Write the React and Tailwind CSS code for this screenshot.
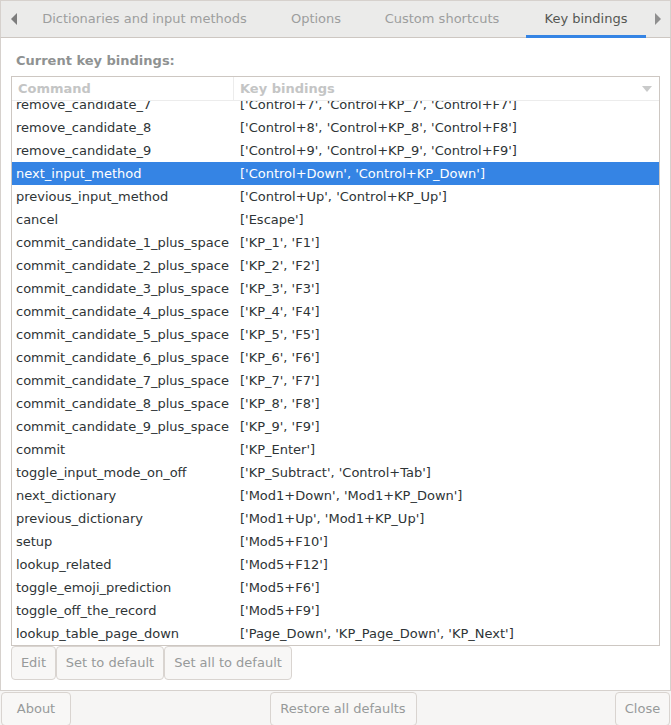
import React from 'react';

const ROWS = [
  ['remove_candidate_7', "['Control+7', 'Control+KP_7', 'Control+F7']"],
  ['remove_candidate_8', "['Control+8', 'Control+KP_8', 'Control+F8']"],
  ['remove_candidate_9', "['Control+9', 'Control+KP_9', 'Control+F9']"],
  ['next_input_method', "['Control+Down', 'Control+KP_Down']"],
  ['previous_input_method', "['Control+Up', 'Control+KP_Up']"],
  ['cancel', "['Escape']"],
  ...[1, 2, 3, 4, 5, 6, 7, 8, 9].map((n) => [`commit_candidate_${n}_plus_space`, `['KP_${n}', 'F${n}']`]),
  ['commit', "['KP_Enter']"],
  ['toggle_input_mode_on_off', "['KP_Subtract', 'Control+Tab']"],
  ['next_dictionary', "['Mod1+Down', 'Mod1+KP_Down']"],
  ['previous_dictionary', "['Mod1+Up', 'Mod1+KP_Up']"],
  ['setup', "['Mod5+F10']"],
  ['lookup_related', "['Mod5+F12']"],
  ['toggle_emoji_prediction', "['Mod5+F6']"],
  ['toggle_off_the_record', "['Mod5+F9']"],
  ['lookup_table_page_down', "['Page_Down', 'KP_Page_Down', 'KP_Next']"],
];

const SELECTED = 'next_input_method';

export default function App() {
  return (
    <div
      className="w-[671px] h-[725px] flex flex-col bg-[#f6f5f4] text-[13px] text-[#2e3436] overflow-hidden"
      style={{ fontFamily: '"DejaVu Sans", sans-serif' }}
    >
      {/* TABS */}
      <div className="h-[38px] shrink-0 flex items-stretch bg-[#ebebea] border border-[#d6d1cd] border-b-[#cdc7c2]">
        <div className="w-[26px] flex items-center justify-center">
          <svg width="8" height="14" viewBox="0 0 8 14"><polygon points="7,1 7,13 1,7" fill="#7d7d7d" /></svg>
        </div>
        <Tab label="Dictionaries and input methods" w="w-[235px]" />
        <Tab label="Options" w="w-[108px]" />
        <Tab label="Custom shortcuts" w="w-[144px]" />
        <div className="w-[12px]" />
        <Tab label="Key bindings" w="w-[120px]" active />
        <div className="flex-1 flex items-center justify-center">
          <svg width="8" height="14" viewBox="0 0 8 14"><polygon points="1,1 1,13 7,7" fill="#8f8f8f" /></svg>
        </div>
      </div>

      {/* PAGE */}
      <div className="flex-1 flex flex-col bg-white border-x border-b border-[#d6d1cd] px-[10px]">
        <div className="h-[38px] flex items-center pl-[5px] pt-[8px] font-bold text-[#8f9292]">Current key bindings:</div>

        <div className="h-[570px] border border-[#cdc7c2] flex flex-col">
          <div className="h-[24px] shrink-0 flex items-center border-b border-[#ececec] font-bold text-[#c4c5c5]">
            <div className="w-[222px] pl-[6px] border-r border-[#ececec] h-full flex items-center">Command</div>
            <div className="flex-1 pl-[6px] flex items-center">Key bindings</div>
            <svg className="mr-[7px]" width="10" height="6" viewBox="0 0 10 6"><polygon points="0,0 10,0 5,6" fill="#c9caca" /></svg>
          </div>
          {/* list, scrolled down a little */}
          <div className="flex-1 overflow-hidden">
            <div className="-mt-[8px]">
              {ROWS.map(([cmd, keys]) => {
                const sel = cmd === SELECTED;
                return (
                  <div
                    key={cmd}
                    className={`h-[23px] flex items-center whitespace-nowrap ${sel ? 'bg-[#3584e4] text-white' : ''}`}
                  >
                    <div className="w-[228px] pl-[4px]">{cmd}</div>
                    <div className="flex-1">{keys}</div>
                  </div>
                );
              })}
            </div>
          </div>
        </div>

        <div className="flex pt-0 pb-[10px]">
          <Btn label="Edit" w="w-[45px]" />
          <Btn label="Set to default" w="w-[108px]" />
          <Btn label="Set all to default" w="w-[128px]" />
        </div>
      </div>

      {/* FOOTER */}
      <div className="h-[35px] shrink-0 flex items-stretch justify-between pt-[1px] px-[1px]">
        <Btn label="About" w="w-[70px]" />
        <Btn label="Restore all defaults" w="w-[147px]" />
        <Btn label="Close" w="w-[55px]" />
      </div>
    </div>
  );
}

function Tab({ label, w, active }) {
  return (
    <div className={`${w} relative flex items-center justify-center ${active ? 'text-[#555753]' : 'text-[#9d9e9e]'}`}>
      {label}
      {active && <div className="absolute left-0 right-0 bottom-[-1px] h-[3px] bg-[#3584e4]" />}
    </div>
  );
}

function Btn({ label, w }) {
  return (
    <div className={`${w} h-[34px] flex items-center justify-center rounded-[4px] border border-[#d9d4d0] bg-[#f8f7f6] text-[#979a9a]`}>
      {label}
    </div>
  );
}
